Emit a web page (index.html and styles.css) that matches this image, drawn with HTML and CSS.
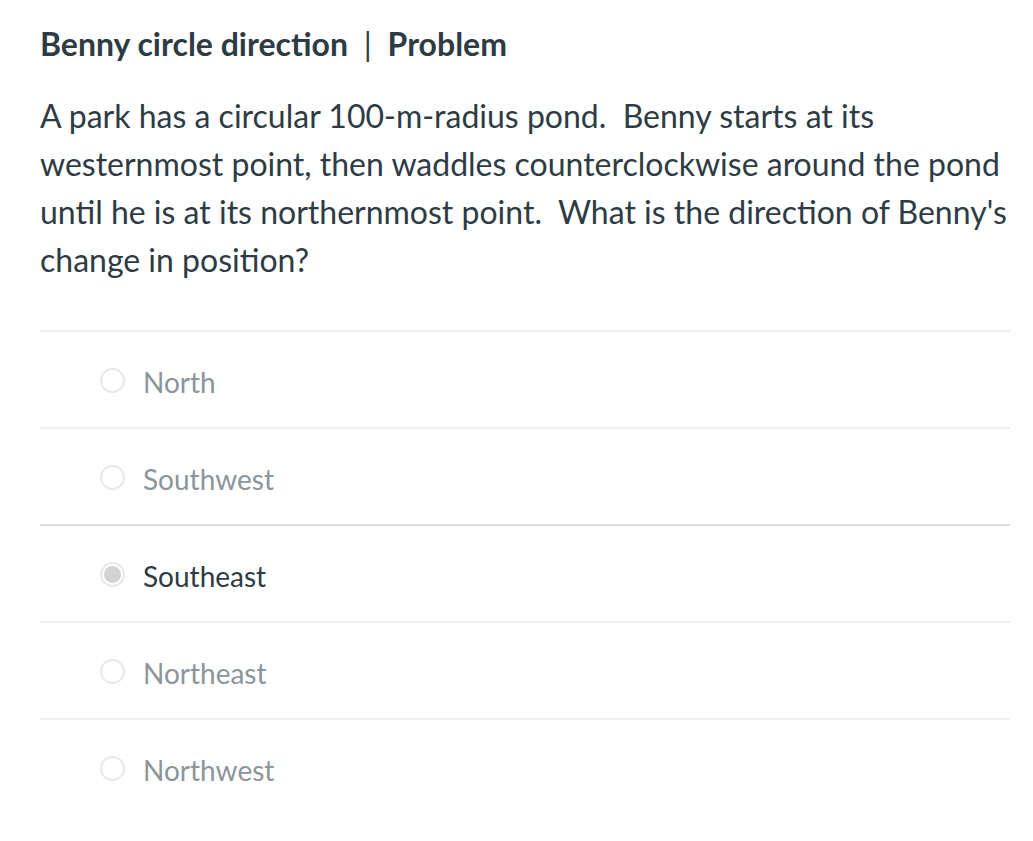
FILE: index.html
```html
<!DOCTYPE html>
<html>
<head>
<meta charset="utf-8">
<link rel="stylesheet" href="styles.css">
</head>
<body>
<div class="quiz">
  <h1 class="title">Benny circle direction <span class="sep">|</span> Problem</h1>
  <p class="question">A park has a circular 100-m-radius pond.&nbsp; Benny starts at its westernmost point, then waddles counterclockwise around the pond until he is at its northernmost point.&nbsp; What is the direction of Benny's change in position?</p>
  <div class="answers">
    <div class="answer"><span class="radio"></span><span class="label">North</span></div>
    <div class="answer"><span class="radio"></span><span class="label">Southwest</span></div>
    <div class="answer selected"><span class="radio"></span><span class="label">Southeast</span></div>
    <div class="answer"><span class="radio"></span><span class="label">Northeast</span></div>
    <div class="answer"><span class="radio"></span><span class="label">Northwest</span></div>
  </div>
</div>
</body>
</html>
```
FILE: styles.css
```css
html, body {
  margin: 0;
  padding: 0;
  background: #fff;
}
body {
  font-family: Lato, "Open Sans", sans-serif;
  color: #2d3b45;
}
.quiz {
  padding: 22px 23px 0 40px;
}
.title {
  margin: 0;
  font-size: 32px;
  font-weight: 700;
  line-height: 44px;
}
.sep {
  font-weight: 400;
  margin: 0 8px;
}
.question {
  margin: 26px 0 0 0;
  font-size: 32px;
  line-height: 48px;
}
.answers {
  margin-top: 46px;
}
.answer {
  display: flex;
  align-items: center;
  height: 90px;
  padding-top: 5px;
  border-top: 2px solid #eeeeee;
  padding-left: 60px;
  color: #8b959c;
  font-size: 28px;
}
.answer.selected {
  border-top-color: #dddddd;
  color: #2d3b45;
}
.radio {
  box-sizing: border-box;
  width: 25px;
  height: 25px;
  border-radius: 50%;
  border: 2px solid #e8e8e8;
  background: #fff;
  margin-right: 18px;
  margin-top: -3px;
  position: relative;
}
.selected .radio::after {
  content: "";
  position: absolute;
  left: 2px;
  top: 2px;
  width: 17px;
  height: 17px;
  border-radius: 50%;
  background: #d3d3d3;
}
```
